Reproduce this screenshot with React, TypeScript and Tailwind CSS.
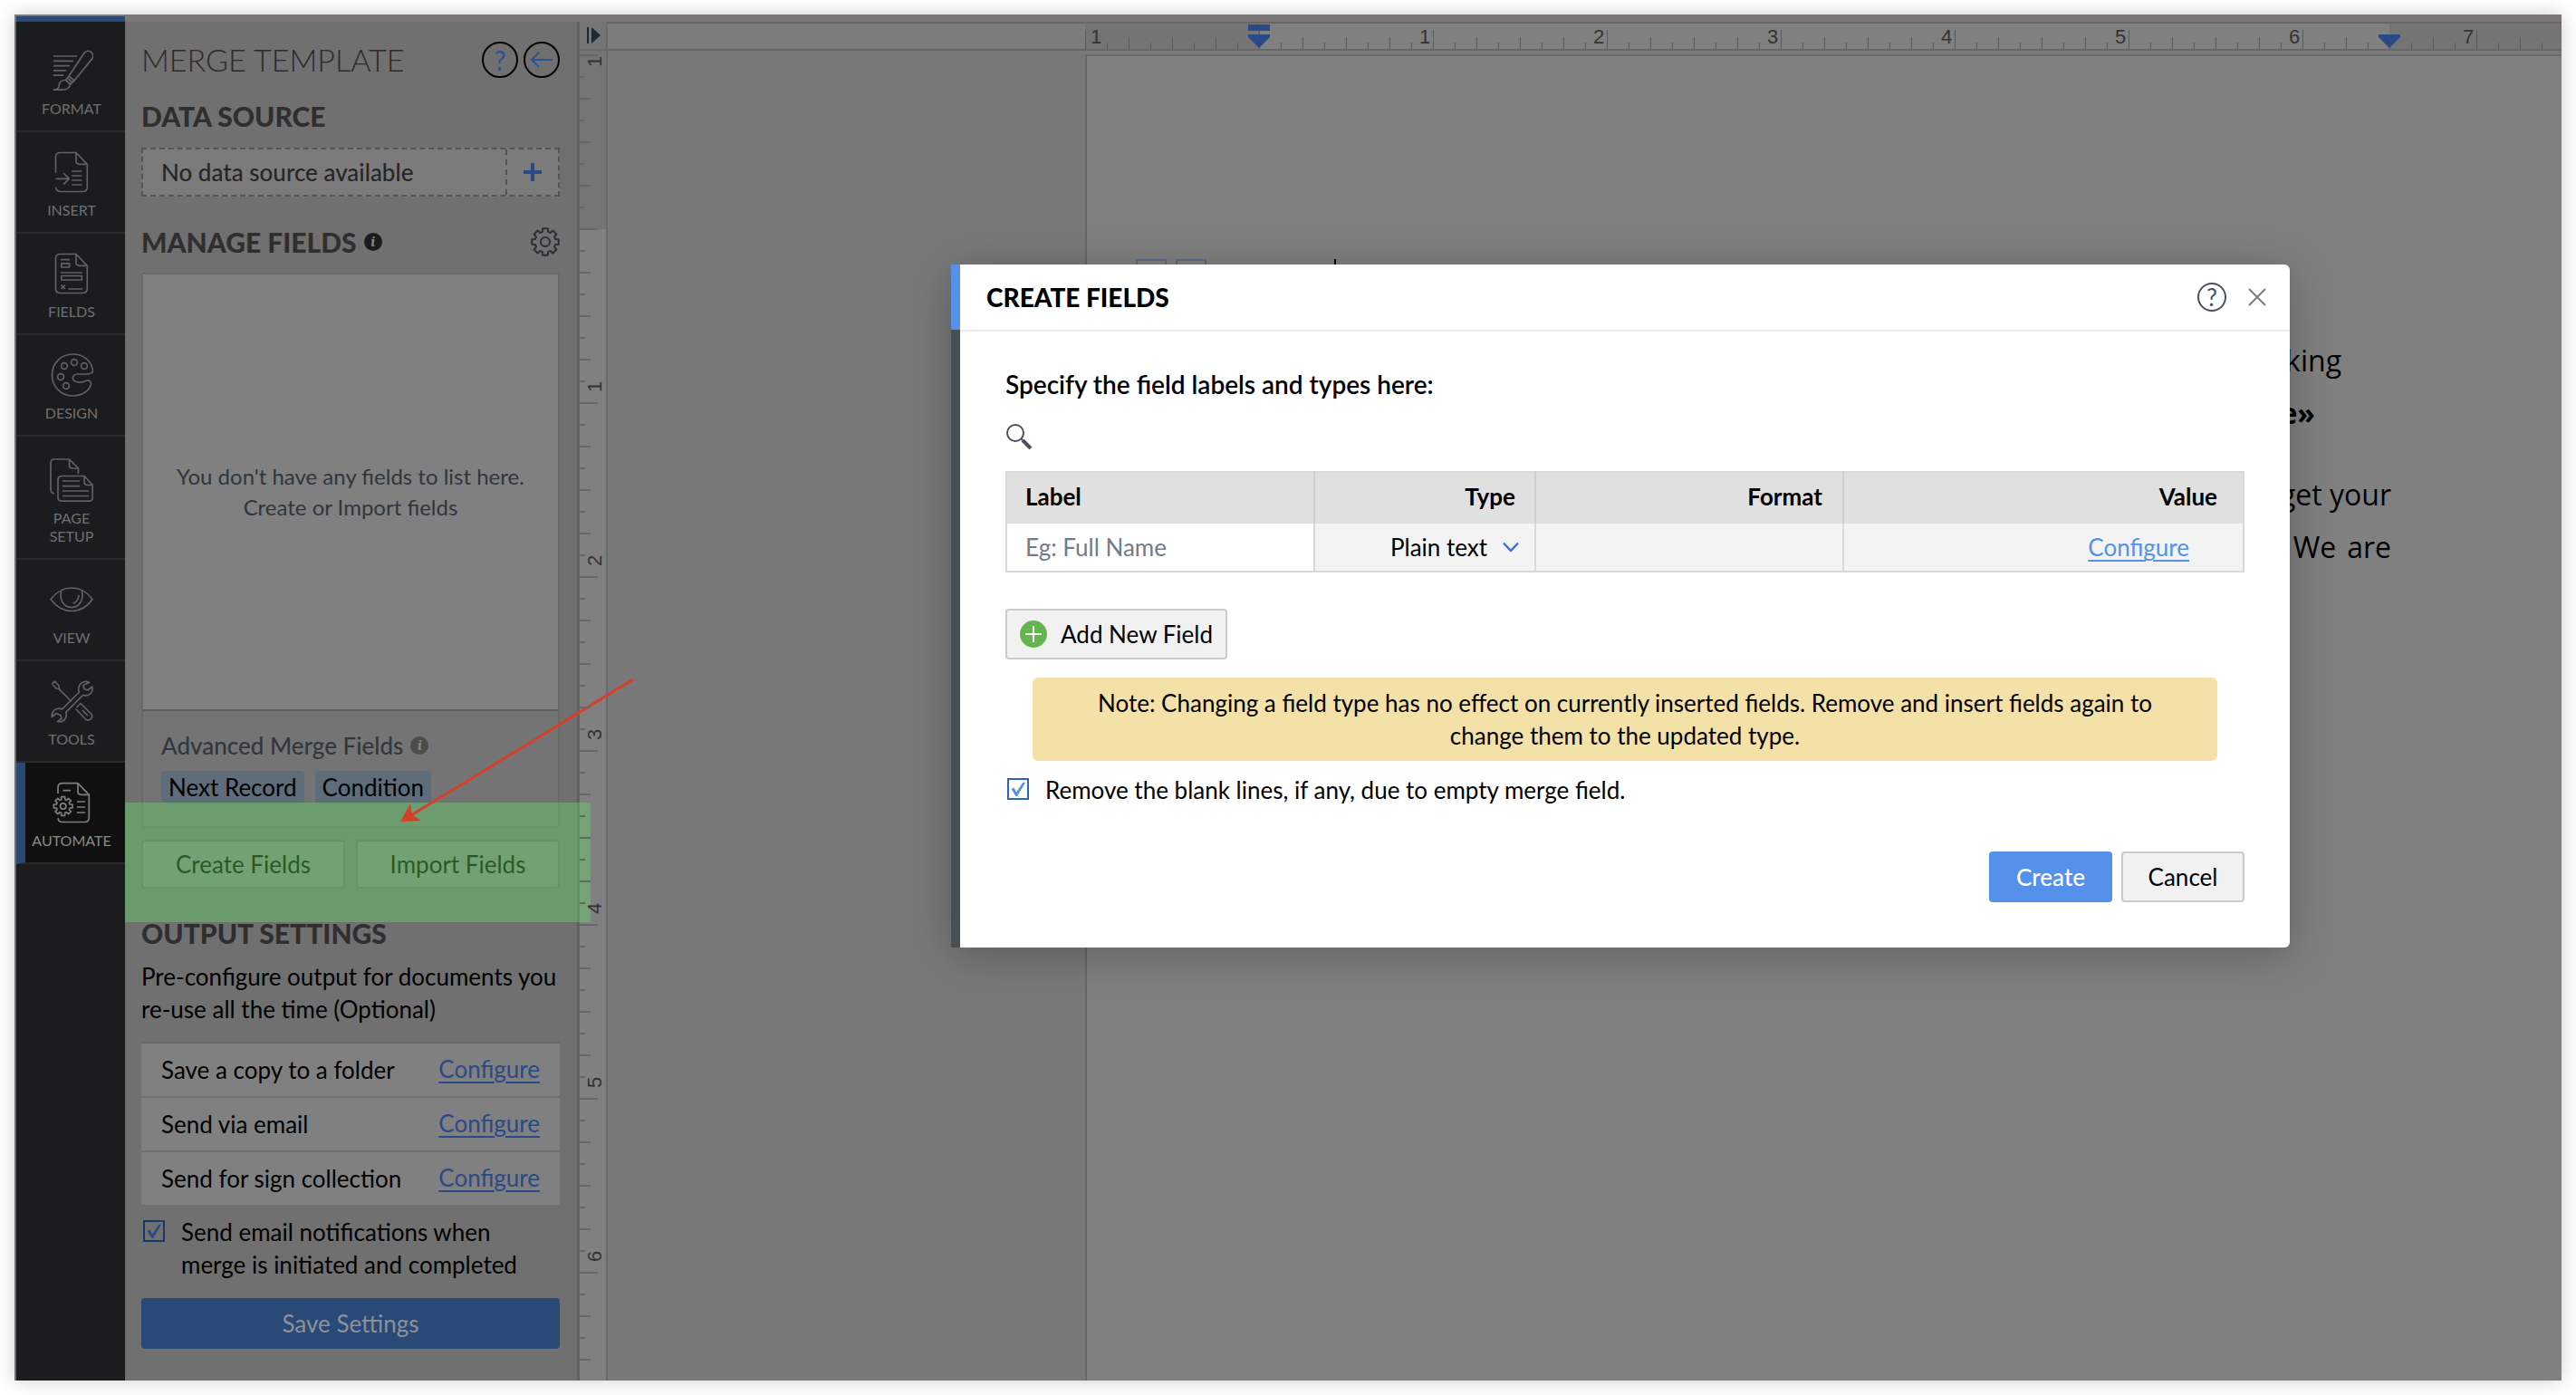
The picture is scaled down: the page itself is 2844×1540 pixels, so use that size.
import React from "react";

const gearPath = (cx: number, cy: number, outer: number, inner: number) => {
  const points: string[] = [];
  for (let i = 0; i < 8; i++) {
    const mid = (i * Math.PI) / 4;
    [
      [-0.27, inner],
      [-0.19, outer],
      [0.19, outer],
      [0.27, inner],
    ].forEach(([offset, radius]) => {
      const x = cx + Math.sin(mid + offset) * radius;
      const y = cy - Math.cos(mid + offset) * radius;
      points.push(`${x.toFixed(2)} ${y.toFixed(2)}`);
    });
  }
  return `M${points.join("L")}Z`;
};

const icons = {
  format: (
    <>
      <path d="M4 8H30M4 13.3H26M4 18.6H22M4 23.9H18M4 29.2H15" />
      <path d="M38 4.5C40.5 1.5 44 1.8 46 3.8C48.3 6 48 9.2 46.3 11.4L27 35L21 30Z" />
      <path d="M21 30L17.5 34.5L22.5 39L27 35M19.3 32.2L24.8 37" />
      <path d="M17.5 34.5C12 34.2 10.5 37 10.2 40.5C9.8 43.5 7.5 45 4.2 45.2H14C19 45.2 22 43 22.5 39" />
    </>
  ),
  insert: (
    <>
      <path d="M6.5 24.5V7.5Q6.5 2.5 11.5 2.5H29L41.3 15.3V40.5Q41.3 45.5 36.3 45.5H11.5Q7.5 45.5 6.5 40.5" />
      <path d="M29 2.5V11.5Q29 15.3 33 15.3H41.3M6.5 31.3H21M15 25L21.3 31.3L15 37.6" />
      <path d="M24.3 23H35.5M24.3 28H35.5M24.3 33H35.5M24.3 38H35.5" />
    </>
  ),
  fields: (
    <>
      <path d="M29 2.5H11.5Q6.5 2.5 6.5 7.5V40.5Q6.5 45.5 11.5 45.5H36.3Q41.3 45.5 41.3 40.5V15.3Z" />
      <path d="M29 2.5V11.5Q29 15.3 33 15.3H41.3M12 8.7H22M12.8 12.8H21.6V17H12.8ZM12 23H36M12.8 26.5H35.4V31H12.8Z" />
      <path d="M12.5 36.5L17 41M17 36.5L12.5 41M20.5 41H36" />
    </>
  ),
  design: (
    <>
      <path d="M47.5 18.5C45.5 7.5 36.5 1 25.5 1C12.5 1 2.5 11 2.5 24C2.5 37 12.5 47 25.5 47C35 47 43.5 42 45.3 34.5C46 31 43.5 29.3 40.5 30.2C37.5 31.5 35 32.3 31.5 32C23.5 31 23.5 23.5 31 23H40C45 23 48 21.5 47.5 18.5Z" />
      <circle cx="27" cy="10" r="3.4" />
      <circle cx="16" cy="14" r="3.4" />
      <circle cx="38" cy="14" r="3.4" />
      <circle cx="12" cy="26" r="3.4" />
      <circle cx="18" cy="36" r="3.4" />
    </>
  ),
  pageSetup: (
    <>
      <path d="M5 39Q1 38 1 34V5Q1 1 5 1H21.5L31.5 11V17M21.5 1V7.5Q21.5 11 25 11H31.5" />
      <path d="M38 19.5H13.5Q9 19.5 9 24V43Q9 47.2 13.5 47.2H43Q47.2 47.2 47.2 43V29.5ZM38 19.5V26Q38 29.5 41.5 29.5H47" />
      <path d="M14 25H33M14 30.7H33M14 36H43M14 41.5H43" />
    </>
  ),
  view: (
    <>
      <path d="M1 23.5C8 14.5 15.5 11 24 11C33 11 40.5 14.5 47 23.5C40.5 33 33 36.5 24 36.5C15.5 36.5 8 33 1 23.5Z" />
      <path d="M12.5 14C10.5 24 15 32.5 24 32.5C33 32.5 37.5 24 35.5 14M32 19C31.8 23.5 29.5 26.5 25.8 28.3" />
    </>
  ),
  tools: (
    <>
      <path d="M2.5 5L5.5 2.2L10 7L10.5 11L24 24.5M2.5 5L7 10L10 10.5L22 22.5" />
      <path d="M29.5 31L34 26.5L46 38.5Q47.5 41.5 45.5 43.5Q43 46 40 44.5L28.5 32.5M36 34L42 40" />
      <path d="M43.5 3.3C39.5 1.5 35 2.8 33 6C31.5 8.8 31.5 11.5 32.5 14L13.5 32.8C10 31.5 6.5 32.3 4.3 34.5C2.5 36.6 2 39 2.5 41.5L7 37.5L12 39.5L12.8 43.5L8.5 46.5C12 47.5 15.5 46 17.3 43C18.5 40.8 18.5 38.5 17.7 36.3L36.5 17.3C39.8 18.5 43.3 17.5 45.5 15C47 13 47.3 10.5 46.7 8L42 12L37.7 10.5L37 6.5Z" />
    </>
  ),
  automate: (
    <>
      <path d="M9 14V7.5Q9 2.7 14 2.7H31L43.3 15.3V40.5Q43.3 45.5 38.3 45.5H14Q9.5 45.5 9 41" />
      <path d="M31 2.7V11.5Q31 15.3 35 15.3H43M14.5 10.7H23M30 23H39M30 29H39M30 35H39" />
      <path d={gearPath(14.7, 28, 10.5, 7.6)} />
      <circle cx="14.7" cy="28" r="3.2" />
    </>
  ),
};

type IconName = keyof typeof icons;

const navItems: { label: string; icon: IconName; active?: boolean }[] = [
  { label: "FORMAT", icon: "format" },
  { label: "INSERT", icon: "insert" },
  { label: "FIELDS", icon: "fields" },
  { label: "DESIGN", icon: "design" },
  { label: "PAGE SETUP", icon: "pageSetup" },
  { label: "VIEW", icon: "view" },
  { label: "TOOLS", icon: "tools" },
  { label: "AUTOMATE", icon: "automate", active: true },
];

const NavRail = () => {
  return (
    <nav className="w-[122px] shrink-0 border-l-2 border-[#6b6b6b] bg-[#1b1c1e] pt-[10px]">
      {navItems.map((item) => (
        <button
          key={item.label}
          className={`flex w-full flex-col items-center gap-2 border-b-2 border-[#27292b] text-base leading-5 ${
            item.active
              ? "border-l-[10px] border-l-[#294a76] bg-[#101011] pr-[8px] text-[#8a8a8a]"
              : "pl-[2px] text-[#6f7071]"
          } ${item.icon === "pageSetup" ? "h-[136px] pt-6" : "h-28 pt-5"}`}
        >
          <svg
            className={`size-12 shrink-0 ${item.active ? "text-[#7e7e7e]" : "text-[#606162]"}`}
            viewBox="0 0 48 48"
            fill="none"
            stroke="currentColor"
            strokeWidth="1.7"
            strokeLinejoin="round"
          >
            {icons[item.icon]}
          </svg>
          <span className={item.icon === "pageSetup" ? "w-14" : ""}>
            {item.label}
          </span>
        </button>
      ))}
    </nav>
  );
};

const InfoBadge = ({ className }: { className: string }) => {
  return (
    <span
      className={`flex size-5 items-center justify-center rounded-full font-serif text-base leading-5 font-bold italic ${className}`}
    >
      i
    </span>
  );
};

const CheckBox = ({ id, dim }: { id: string; dim?: boolean }) => {
  return (
    <span className="relative mt-[5px] block size-6 shrink-0">
      <input
        id={id}
        type="checkbox"
        defaultChecked
        className={`block size-6 appearance-none border-2 ${dim ? "border-[#1d3668]" : "border-[#2d62bd]"}`}
      />
      <svg
        className={`pointer-events-none absolute inset-0 size-6 ${dim ? "text-[#294a86]" : "text-[#5591ea]"}`}
        viewBox="0 0 24 24"
        fill="currentColor"
      >
        <path d="M4.5 12L7.5 10.5L10 15.5L17.5 4.5L20 5L11 20H9.5Z" />
      </svg>
    </span>
  );
};

const outputs = ["Save a copy to a folder", "Send via email", "Send for sign collection"];

const MergePanel = () => {
  return (
    <aside className="relative flex w-[502px] shrink-0 flex-col border-r-[3px] border-[#626262] bg-[#707070] pr-[19px] pl-[18px] text-[26px] leading-9 text-black">
      <div className="mt-[22px] flex h-10 items-center justify-between">
        <h1 className="text-[34px] font-light text-[#2b2b2b]">MERGE TEMPLATE</h1>
        <div className="flex gap-[6px]">
          <button
            aria-label="Help"
            className="size-10 rounded-full border-2 border-black text-[30px] leading-9 text-[#2b5297]"
          >
            ?
          </button>
          <button
            aria-label="Back"
            className="flex size-10 items-center justify-center rounded-full border-2 border-black text-[#2b5297]"
          >
            <svg className="size-7" viewBox="0 0 28 28" fill="none" stroke="currentColor" strokeWidth="2">
              <path d="M26 14H3M11 6L3 14L11 22" />
            </svg>
          </button>
        </div>
      </div>

      <h2 className="mt-6 text-[30px] font-black text-[#2f2f2f]">DATA SOURCE</h2>
      <div className="mt-[17px] flex h-[54px] border-2 border-dashed border-[#545454] bg-[#7b7b7b] font-medium text-[#262626]">
        <span className="flex flex-1 items-center pl-5">No data source available</span>
        <button
          aria-label="Add data source"
          className="flex w-[58px] items-center justify-center border-l-2 border-dashed border-[#545454] text-[#294a86]"
        >
          <svg className="size-5" viewBox="0 0 20 20" stroke="currentColor" strokeWidth="4">
            <path d="M10 0V20M0 10H20" />
          </svg>
        </button>
      </div>

      <div className="mt-8 flex items-center">
        <h2 className="text-[30px] font-black text-[#2f2f2f]">MANAGE FIELDS</h2>
        <InfoBadge className="ml-2 bg-[#1c1c1c] text-[#8a8a8a]" />
        <button aria-label="Field settings" className="ml-auto text-[#2a2e33]">
          <svg className="size-8" viewBox="0 0 32 32" fill="none" stroke="currentColor" strokeWidth="2" strokeLinejoin="round">
            <path d={gearPath(16, 16, 15, 11.5)} />
            <circle cx="16" cy="16" r="5" />
          </svg>
        </button>
      </div>

      <div className="mt-4 flex h-[613px] flex-col rounded-sm border-2 border-[#686868] bg-[#747474]">
        <p className="flex h-[482px] items-center justify-center border-b-2 border-[#5e5e5e] bg-[#808080] text-center text-2xl leading-[34px] text-[#2f363d]">
          You don't have any fields to list here.
          <br />
          Create or Import fields
        </p>
        <div className="mt-5 flex items-center pl-5">
          <h3 className="font-medium text-[#32373d]">Advanced Merge Fields</h3>
          <InfoBadge className="ml-2 bg-[#4c4c4c] text-[#8a8a8a]" />
        </div>
        <div className="mt-[10px] flex gap-3 pl-5">
          <button className="rounded-sm bg-[#5f6d7a] px-2">Next Record</button>
          <button className="rounded-sm bg-[#5f6d7a] px-2">Condition</button>
        </div>
      </div>
      <div className="mt-[13px] grid grid-cols-2 gap-3">
        <button className="h-[54px] rounded-sm border-2 border-[#666] bg-[#7d7d7d]">Create Fields</button>
        <button className="h-[54px] rounded-sm border-2 border-[#666] bg-[#7d7d7d]">Import Fields</button>
      </div>

      <h2 className="mt-[31px] text-[30px] font-black text-[#2f2f2f]">OUTPUT SETTINGS</h2>
      <p className="mt-3 whitespace-nowrap">
        Pre-configure output for documents you
        <br />
        re-use all the time (Optional)
      </p>
      <ul className="mt-[18px] border-t-2 border-[#686868] bg-[#808080]">
        {outputs.map((output) => (
          <li
            key={output}
            className="flex h-[60px] items-center justify-between border-b-2 border-[#707070] pr-[22px] pl-[22px]"
          >
            {output}
            <a href="#" className="pb-[3px] text-[#294a86] underline decoration-2 underline-offset-4">
              Configure
            </a>
          </li>
        ))}
      </ul>
      <div className="mt-[10px] flex gap-[18px] pl-[2px] whitespace-nowrap">
        <CheckBox id="notify" dim />
        <label htmlFor="notify">
          Send email notifications when
          <br />
          merge is initiated and completed
        </label>
      </div>
      <button className="mt-[19px] mb-[34px] h-14 rounded-sm bg-[#294a76] text-[#8d9097]">Save Settings</button>

      {/* highlight over the field buttons */}
      <div className="pointer-events-none absolute top-[862px] left-0 h-[132px] w-[514px] bg-[rgba(100,217,102,0.41)]" />
      <svg
        className="pointer-events-none absolute top-[722px] left-[300px] h-[168px] w-[266px]"
        viewBox="0 0 266 168"
        fill="#d6402b"
      >
        <path d="M261 4L16 154" stroke="#d6402b" strokeWidth="3" />
        <path d="M4 161L15 141L17 153L27 160Z" />
      </svg>
    </aside>
  );
};

const INCH = 192;
const EIGHTHS = 8;

const VerticalRuler = () => {
  const ticks = Array.from({ length: 61 }, (_, i) => i - 7);
  return (
    <div className="flex w-[31px] shrink-0 flex-col border-r-2 border-[#6a6a6a] bg-[#808080]">
      <button aria-label="Toggle ruler" className="h-8 border-b-2 border-[#6a6a6a] bg-[#757575] pl-2">
        <svg className="h-[18px] w-4" viewBox="0 0 16 18">
          <path d="M1 0V18" stroke="#1f2833" strokeWidth="2" />
          <path d="M5 0L15 9L5 18Z" fill="#1f2833" />
        </svg>
      </button>
      <div className="relative flex-1">
        <svg className="absolute inset-0 size-full" fill="#333">
          <rect width="30" height="197" fill="#757575" />
          {ticks.map((i) => (
            <rect
              key={i}
              y={196 + (i * INCH) / EIGHTHS}
              width={i % 8 === 0 ? 20 : i % 2 === 0 ? 12 : 6}
              height="2"
              fill="#676767"
            />
          ))}
          <rect y="4" width="20" height="2" fill="#676767" />
          {[-1, 1, 2, 3, 4, 5, 6].map((n) => (
            <text
              key={n}
              transform={`translate(24 ${n < 0 ? 18 : 196 + n * INCH - 11}) rotate(-90)`}
              className="text-[22px]"
              fontFamily="Liberation Sans, sans-serif"
            >
              {Math.abs(n)}
            </text>
          ))}
        </svg>
      </div>
    </div>
  );
};

const HorizontalRuler = () => {
  const ticks = Array.from({ length: 70 }, (_, i) => i - 8);
  return (
    <div className="flex h-8 border-t-2 border-b-2 border-[#676767] bg-[#7c7c7c] pl-[527px]">
      <svg className="h-full flex-1" fill="#333">
        <rect width="1440" height="28" fill="#808080" />
        <rect width="192" height="28" fill="#747474" />
        <rect x="1440" width="100%" height="28" fill="#747474" />
        {ticks.map((i) => (
          <rect
            key={i}
            x={192 + (i * INCH) / EIGHTHS}
            y={i % 8 === 0 ? 7 : i % 2 === 0 ? 15 : 21}
            width="1"
            height="22"
            fill="#5c5c5c"
          />
        ))}
        {[-1, 1, 2, 3, 4, 5, 6, 7].map((n) => (
          <text
            key={n}
            x={n < 0 ? 6 : 192 + n * INCH - 15}
            y="22"
            className="text-[22px]"
            fontFamily="Liberation Sans, sans-serif"
          >
            {Math.abs(n)}
          </text>
        ))}
        <path d="M180 1H204V8H180ZM180 12H204V15L192 27L180 15ZM1428 12H1452V15L1440 27L1428 15Z" fill="#294a86" />
      </svg>
    </div>
  );
};

const DocumentPage = () => {
  return (
    <div className="relative mt-1 ml-[527px] flex-1 border-t-2 border-l-2 border-[#686868] bg-[#808080]">
      <div className="absolute top-[224px] left-[54px] h-8 w-[34px] border-2 border-[#5d6a86]" />
      <div className="absolute top-[224px] left-[98px] h-8 w-[34px] border-2 border-[#5d6a86]" />
      <div className="absolute top-[224px] left-[273px] h-9 w-[2px] bg-black" />
      <div className="w-[1440px] pt-[307px] text-right font-['Open_Sans',sans-serif] text-[32px] leading-[58px] text-black">
        <p className="pr-[55px]">king</p>
        <p className="pr-[84px] font-bold">e»</p>
        <p className="mt-8">get your</p>
        <p className="flex justify-end gap-3">
          <span>We</span>
          <span>are</span>
        </p>
      </div>
    </div>
  );
};

const CreateFieldsDialog = () => {
  return (
    <section
      role="dialog"
      aria-labelledby="dialog-title"
      className="absolute top-[276px] left-[1034px] w-[1478px] rounded-r-md bg-white text-[26px] leading-9 text-black shadow-[0_8px_50px_rgba(0,0,0,0.25)]"
    >
      <header className="flex h-[72px] items-center border-l-[10px] border-[#5591ea] pr-[26px] pl-[29px]">
        <h2 id="dialog-title" className="flex-1 text-[28px] font-black">
          CREATE FIELDS
        </h2>
        <button
          aria-label="Help"
          className="mr-6 size-8 rounded-full border-2 border-[#48525d] text-[26px] leading-7 text-[#48525d]"
        >
          ?
        </button>
        <button aria-label="Close" className="text-[#7c7c7c]">
          <svg className="size-5" viewBox="0 0 20 20" stroke="currentColor" strokeWidth="2">
            <path d="M1 1L19 19M19 1L1 19" />
          </svg>
        </button>
      </header>
      <div className="border-l-[10px] border-[#4a4f54] px-[50px] pb-[50px]">
        <div className="-mx-[50px] h-[2px] bg-[#ececec]" />
        <p className="mt-10 text-[28px] font-semibold">Specify the field labels and types here:</p>
        <button aria-label="Search fields" className="mt-[26px] block text-[#48525d]">
          <svg className="h-7 w-[30px]" viewBox="0 0 30 28" fill="none" stroke="currentColor">
            <circle cx="11" cy="10" r="9" strokeWidth="2" />
            <path d="M17 16L19 18" strokeWidth="2" />
            <path d="M19 18L28 27" strokeWidth="4" />
          </svg>
        </button>
        <table className="mt-6 w-full table-fixed border-collapse border-2 border-[#d9d9d9]">
          <thead>
            <tr className="h-[57px] bg-[#e0e0e0] text-right">
              <th className="w-[340px] border-r-2 border-[#cfcfcf] pb-1 pl-5 text-left font-bold">Label</th>
              <th className="w-[244px] border-r-2 border-[#cfcfcf] pr-[21px] pb-1 font-bold">Type</th>
              <th className="w-[340px] border-r-2 border-[#cfcfcf] pr-[22px] pb-1 font-bold">Format</th>
              <th className="pr-7 pb-1 font-bold">Value</th>
            </tr>
          </thead>
          <tbody>
            <tr className="h-[53px] bg-[#f3f3f3]">
              <td className="border-r-2 border-[#d9d9d9] bg-white p-0">
                <input
                  aria-label="Label"
                  placeholder="Eg: Full Name"
                  className="block h-[50px] w-full pl-5 placeholder:text-[#727b88]"
                />
              </td>
              <td className="border-r-2 border-[#d9d9d9] p-0">
                <div className="flex items-center justify-end gap-4 pr-[17px]">
                  <select aria-label="Type" className="appearance-none">
                    <option>Plain text</option>
                  </select>
                  <svg className="pointer-events-none h-3 w-[18px]" viewBox="0 0 18 12" fill="none" stroke="#3f70cf" strokeWidth="2.5">
                    <path d="M1 1.5L9 10L17 1.5" />
                  </svg>
                </div>
              </td>
              <td className="border-r-2 border-[#d9d9d9]" />
              <td className="p-0 pr-[59px] text-right">
                <a href="#" className="text-[#5591ea] underline decoration-2 underline-offset-4">
                  Configure
                </a>
              </td>
            </tr>
          </tbody>
        </table>
        <button className="mt-10 flex h-14 items-center gap-[15px] rounded-sm border-2 border-[#cacaca] bg-[#f1f1f1] px-[14px]">
          <svg className="size-[30px]" viewBox="0 0 30 30" stroke="white" strokeWidth="2">
            <circle cx="15" cy="15" r="15" fill="#64b550" stroke="none" />
            <path d="M15 6V24M6 15H24" />
          </svg>
          Add New Field
        </button>
        <p className="mx-[30px] mt-5 rounded-md bg-[#f3e1a7] py-[10px] text-center">
          Note: Changing a field type has no effect on currently inserted fields. Remove and insert fields again to
          <br />
          change them to the updated type.
        </p>
        <div className="mt-[14px] flex gap-[18px] pl-[2px]">
          <CheckBox id="blank-lines" />
          <label htmlFor="blank-lines">Remove the blank lines, if any, due to empty merge field.</label>
        </div>
        <div className="mt-[50px] flex justify-end gap-[10px]">
          <button className="h-14 w-[136px] rounded-sm bg-[#5591ea] font-medium text-white">Create</button>
          <button className="h-14 w-[136px] rounded-sm border-2 border-[#cacaca] bg-[#f1f1f1]">Cancel</button>
        </div>
      </div>
    </section>
  );
};

const App = () => {
  return (
    <div className="flex min-h-screen bg-white p-4 font-['Lato',sans-serif]">
      <div className="relative flex min-w-0 flex-1 flex-col shadow-[0_0_20px_rgba(0,0,0,0.2)]">
        <div className="h-2 border-l-2 border-[#7d7878] bg-[#7d7878] pt-[2px]">
          <div className="h-[6px] w-[120px] bg-[#294a76]" />
        </div>
        <div className="flex flex-1">
          <NavRail />
          <MergePanel />
          <VerticalRuler />
          <main className="flex min-w-0 flex-1 flex-col overflow-hidden bg-[#797979]">
            <HorizontalRuler />
            <DocumentPage />
          </main>
        </div>
        <CreateFieldsDialog />
      </div>
    </div>
  );
};

export default App;
